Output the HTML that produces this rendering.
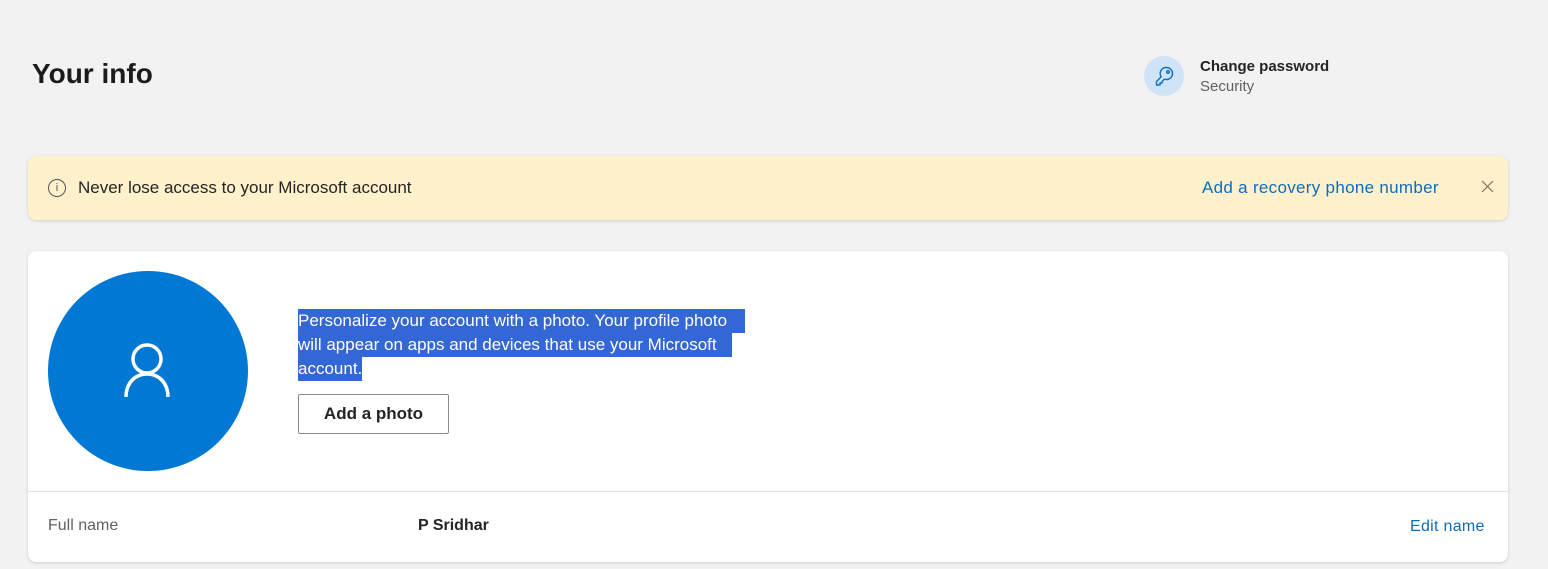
<!DOCTYPE html>
<html><head><meta charset="utf-8"><style>
*{margin:0;padding:0;box-sizing:border-box}
body{width:1548px;height:569px;background:#f2f2f2;font-family:"Liberation Sans",sans-serif;color:#242424;position:relative;overflow:hidden}
.a{position:absolute;white-space:nowrap}
.hl{background:#3367d6;color:#fff}
</style></head><body>
<div class="a" style="left:32px;top:58px;font-size:28px;font-weight:600;color:#1b1b1b">Your info</div>
<div class="a" style="left:1144px;top:56px;width:40px;height:40px;border-radius:50%;background:#cfe4f7"></div>
<svg class="a" style="left:1152px;top:64px" width="24" height="24" viewBox="0 0 24 24" fill="none" stroke="#0f6cbd" stroke-width="1.4" stroke-linejoin="round"><path d="M14.5 3.5a6 6 0 0 1 0 12a6 6 0 0 1-2-.35L10 17.6V19H8v2H4.5v-3.5L9.2 12.8A6 6 0 0 1 14.5 3.5z"/><circle cx="16" cy="8" r="1.3"/></svg>
<div class="a" style="left:1200px;top:58px;font-size:15px;font-weight:600;color:#242424">Change password</div>
<div class="a" style="left:1200px;top:78px;font-size:15px;color:#616161">Security</div>

<div class="a" style="left:28px;top:156px;width:1480px;height:64px;background:#fff1cc;border-radius:8px;box-shadow:0 1px 3px rgba(0,0,0,.15)"></div>
<div class="a" style="left:48px;top:179px;width:18px;height:18px;border:1.3px solid #555;border-radius:50%;font-size:11px;line-height:16px;text-align:center;color:#555">i</div>
<div class="a" style="left:78px;top:178px;font-size:17px;color:#242424">Never lose access to your Microsoft account</div>
<div class="a" style="left:1202px;top:178px;font-size:17px;color:#0f6cbd;letter-spacing:0.3px">Add a recovery phone number</div>
<svg class="a" style="left:1481px;top:180px" width="13" height="13" viewBox="0 0 13 13" stroke="#8a6a5a" stroke-width="1.2"><path d="M1 1L12 12M12 1L1 12"/></svg>

<div class="a" style="left:28px;top:251px;width:1480px;height:311px;background:#fff;border-radius:8px;box-shadow:0 1px 3px rgba(0,0,0,.15)"></div>
<div class="a" style="left:48px;top:271px;width:200px;height:200px;border-radius:50%;background:#0078d4"></div>
<svg class="a" style="left:108px;top:331px" width="80" height="80" viewBox="0 0 80 80" fill="none" stroke="#fff" stroke-width="3.5"><circle cx="39" cy="28" r="14"/><path d="M18 66C18 52 27 43 39 43C51 43 60 52 60 66"/></svg>
<div class="a" style="left:298px;top:309px;font-size:17px;line-height:24px">
<span class="hl" style="display:inline-block;height:24px;width:447px">Personalize your account with a photo. Your profile photo</span><br>
<span class="hl" style="display:inline-block;height:24px;width:434px">will appear on apps and devices that use your Microsoft</span><br>
<span class="hl" style="display:inline-block;height:24px;width:64px">account.</span></div>
<div class="a" style="left:298px;top:394px;width:151px;height:40px;border:1px solid #8a8a8a;border-radius:2px;font-size:17px;font-weight:600;line-height:38px;text-align:center">Add a photo</div>
<div class="a" style="left:28px;top:491px;width:1480px;height:1px;background:#e0e0e0"></div>
<div class="a" style="left:48px;top:517px;font-size:16px;color:#616161">Full name</div>
<div class="a" style="left:418px;top:517px;font-size:16px;font-weight:600;color:#242424">P Sridhar</div>
<div class="a" style="left:1410px;top:518px;font-size:16px;color:#0f6cbd;letter-spacing:0.3px">Edit name</div>
</body></html>
